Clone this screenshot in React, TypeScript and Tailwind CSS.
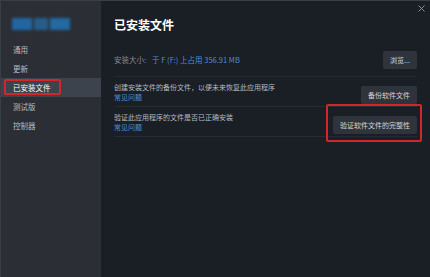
import React from "react";

const navItems = ["通用", "更新", "已安装文件", "测试版", "控制器"];

const font = { fontFamily: '"Noto Sans CJK SC", "Noto Sans", sans-serif' };

const Row: React.FC<{
  text: string;
  button: string;
  highlight?: boolean;
}> = ({ text, button, highlight }) => (
  <div className="flex items-center justify-between h-[30px] border-b border-[#262b33]">
    <div className="flex flex-col leading-[10px]">
      <span className="text-[7px] text-[#b4b9bf]">{text}</span>
      <span className="text-[7px] text-[#4a90d9]">常见问题</span>
    </div>
    <div className="relative">
      <button className="h-[18px] px-[7px] bg-[#2f343c] text-[7px] text-[#d0d4d8] rounded-[2px]">
        {button}
      </button>
      {highlight && (
        <div className="absolute -left-[7px] -right-[5px] -top-[5px] -bottom-[8px] border-2 border-[#d3262a] rounded-[2px]" />
      )}
    </div>
  </div>
);

export default function App() {
  return (
    <div
      className="w-[430px] h-[277px] flex bg-[#1a1e25] border-t border-l border-[#3a3e45] overflow-hidden"
      style={font}
    >
      <div className="w-[100px] shrink-0 bg-[#2b2e34] flex flex-col">
        <div className="h-[39px] pl-[11px] pt-[17px]">
          <div className="flex gap-[2px] blur-[1.5px]">
            <div className="w-[20px] h-[12px] bg-[#2166a0]" />
            <div className="w-[14px] h-[12px] bg-[#285d8b]" />
            <div className="w-[20px] h-[12px] bg-[#236aa3]" />
          </div>
        </div>
        {navItems.map((item) => (
          <div
            key={item}
            className={`relative h-[19px] flex items-center pl-[12px] text-[7.5px] ${
              item === "已安装文件"
                ? "bg-[#3d434c] text-white"
                : "text-[#b9bdc2]"
            }`}
          >
            {item}
            {item === "已安装文件" && (
              <div className="absolute left-[3px] top-[1px] w-[57px] h-[16px] border-2 border-[#d3262a] rounded-[2px]" />
            )}
          </div>
        ))}
      </div>
      <div className="relative flex-1 pl-[13px] pr-[13px] pt-[14px]">
        <button className="absolute right-[5px] top-[4px] text-[#8b9097]">
          <svg width="7" height="7" viewBox="0 0 7 7" stroke="currentColor" strokeWidth="1">
            <path d="M0.5 0.5 L6.5 6.5 M6.5 0.5 L0.5 6.5" />
          </svg>
        </button>
        <h1 className="text-[12px] font-bold text-white h-[20px] leading-[20px]">
          已安装文件
        </h1>
        <div className="mt-[9px] flex items-center justify-between h-[33px] border-b border-[#262b33]">
          <div className="text-[7.5px] flex gap-[6px]">
            <span className="text-[#868c94]">安装大小:</span>
            <span className="text-[#4a90d9]">于 F (F:) 上占用 356.91 MB</span>
          </div>
          <button className="h-[18px] w-[34px] bg-[#2f343c] text-[7px] text-[#d0d4d8] rounded-[2px]">
            浏览...
          </button>
        </div>
        <Row
          text="创建安装文件的备份文件，以便未来恢复此应用程序"
          button="备份软件文件"
        />
        <Row
          text="验证此应用程序的文件是否已正确安装"
          button="验证软件文件的完整性"
          highlight
        />
      </div>
    </div>
  );
}
